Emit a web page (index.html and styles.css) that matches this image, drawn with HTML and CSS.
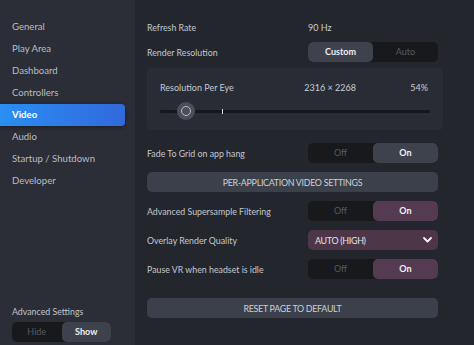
FILE: index.html
```html
<!DOCTYPE html>
<html lang="en">
<head>
    <meta charset="UTF-8">
    <title>Settings - Video</title>
    <link rel="stylesheet" href="styles.css">
</head>
<body>
    <aside class="sidebar">
        <nav class="nav">
            <div class="nav-item">General</div>
            <div class="nav-item">Play Area</div>
            <div class="nav-item">Dashboard</div>
            <div class="nav-item">Controllers</div>
            <div class="nav-item active">Video</div>
            <div class="nav-item">Audio</div>
            <div class="nav-item">Startup / Shutdown</div>
            <div class="nav-item">Developer</div>
        </nav>
        <div class="advanced">
            <div class="advanced-label">Advanced Settings</div>
            <div class="segmented small">
                <span class="seg off">Hide</span>
                <span class="seg on">Show</span>
            </div>
        </div>
    </aside>

    <main class="content">
        <div class="row first">
            <span class="label">Refresh Rate</span>
            <span class="value">90 Hz</span>
        </div>
        <div class="row before-panel">
            <span class="label">Render Resolution</span>
            <div class="segmented">
                <span class="seg on">Custom</span>
                <span class="seg off">Auto</span>
            </div>
        </div>

        <div class="panel">
            <div class="panel-head">
                <span class="label">Resolution Per Eye</span>
                <span class="res">2316 × 2268</span>
                <span class="pct">54%</span>
            </div>
            <div class="slider">
                <div class="track"></div>
                <div class="tick"></div>
                <div class="knob"><div class="knob-ring"></div></div>
            </div>
        </div>

        <div class="row gap-lg">
            <span class="label">Fade To Grid on app hang</span>
            <div class="segmented">
                <span class="seg off">Off</span>
                <span class="seg on">On</span>
            </div>
        </div>

        <button class="wide-btn">PER-APPLICATION VIDEO SETTINGS</button>

        <div class="row">
            <span class="label">Advanced Supersample Filtering</span>
            <div class="segmented">
                <span class="seg off">Off</span>
                <span class="seg on purple">On</span>
            </div>
        </div>
        <div class="row">
            <span class="label">Overlay Render Quality</span>
            <div class="dropdown">
                <span>AUTO (HIGH)</span>
                <svg width="9" height="6" viewBox="0 0 9 6"><path d="M1 1 L4.5 4.5 L8 1" fill="none" stroke="#f2f2f4" stroke-width="1.8" stroke-linecap="round" stroke-linejoin="round"/></svg>
            </div>
        </div>
        <div class="row">
            <span class="label">Pause VR when headset is idle</span>
            <div class="segmented">
                <span class="seg off">Off</span>
                <span class="seg on purple">On</span>
            </div>
        </div>

        <button class="wide-btn reset">RESET PAGE TO DEFAULT</button>
    </main>
</body>
</html>
```

FILE: styles.css
```css
body {
    margin: 0;
    height: 345px;
    display: flex;
    overflow: hidden;
    font-family: Lato, "Open Sans", sans-serif;
    font-size: 8.8px;
    background: #23262d;
    color: #c4c8cf;
}

.sidebar {
    width: 135px;
    flex-shrink: 0;
    background: #2b2e36;
    display: flex;
    flex-direction: column;
    justify-content: space-between;
}

.nav {
    padding-top: 16px;
    width: 125px;
}

.nav-item {
    height: 22px;
    line-height: 22px;
    padding-left: 12px;
    font-size: 9.6px;
    color: #b9bdc5;
}

.nav-item.active {
    background: linear-gradient(to right, #2a8ef2, #3169dc);
    border-radius: 0 4px 4px 0;
    color: #fff;
    font-weight: bold;
    box-shadow: 0 1px 4px rgba(0, 0, 0, 0.4);
}

.advanced {
    padding: 0 0 3px 12px;
}

.advanced-label {
    color: #c0c4cb;
    margin-bottom: 5px;
}

.segmented {
    display: flex;
    width: 130px;
    height: 20px;
    border-radius: 5px;
    overflow: hidden;
    background: #18191d;
}

.segmented.small {
    width: 99px;
}

.seg {
    flex: 1;
    text-align: center;
    line-height: 20px;
    font-size: 9px;
}

.seg.off {
    color: #565a61;
}

.seg.on {
    background: #3d424d;
    color: #eef0f3;
    font-weight: bold;
    border-radius: 5px;
}

.seg.on.purple {
    background: #553b52;
}

.content {
    flex: 1;
    padding: 17px 36px 0 12px;
    display: flex;
    flex-direction: column;
}

.row {
    height: 20px;
    display: flex;
    align-items: center;
    justify-content: space-between;
    margin-bottom: 9px;
}

.row.first {
    margin-bottom: 5px;
}

.row.before-panel {
    margin-bottom: 6px;
}

.row.gap-lg {
    margin-top: 13px;
}

.label {
    color: #c4c8cf;
}

.value {
    width: 130px;
    font-size: 9px;
    color: #c9cdd3;
}

.panel {
    margin-right: -5px;
    height: 62px;
    background: #292c34;
    border-radius: 4px;
    padding: 0 13px;
    display: flex;
    flex-direction: column;
}

.panel-head {
    display: flex;
    align-items: center;
    height: 20px;
    margin-top: 9px;
    font-size: 9px;
}

.panel-head .label {
    flex: 1;
}

.res {
    width: 106px;
    color: #c9cdd3;
}

.pct {
    color: #c9cdd3;
    padding-right: 2px;
}

.slider {
    position: relative;
    height: 20px;
    margin-top: 4px;
}

.track {
    position: absolute;
    left: 0;
    right: 0;
    top: 9px;
    height: 3px;
    background: #15171b;
    border-radius: 2px;
}

.tick {
    position: absolute;
    left: 62px;
    top: 8px;
    width: 1px;
    height: 5px;
    background: #d8dade;
}

.knob {
    position: absolute;
    left: 17px;
    top: 1px;
    width: 18px;
    height: 18px;
    border-radius: 50%;
    background: #4a4f59;
    display: flex;
    align-items: center;
    justify-content: center;
}

.knob-ring {
    width: 8px;
    height: 8px;
    border-radius: 50%;
    border: 1.5px solid #b8bcc4;
}

.wide-btn {
    height: 20px;
    border: none;
    border-radius: 5px;
    background: #3b404b;
    color: #cdd0d6;
    font-family: inherit;
    font-size: 8.9px;
    letter-spacing: -0.3px;
    font-weight: normal;
    margin-bottom: 9px;
    padding: 0;
}

.wide-btn.reset {
    margin-top: 10px;
}

.dropdown {
    width: 130px;
    height: 20px;
    box-sizing: border-box;
    border-radius: 5px;
    background: #4c3648;
    color: #e2e4e8;
    font-size: 8.9px;
    letter-spacing: -0.3px;
    display: flex;
    align-items: center;
    justify-content: space-between;
    padding: 0 6px 0 7px;
}
```
